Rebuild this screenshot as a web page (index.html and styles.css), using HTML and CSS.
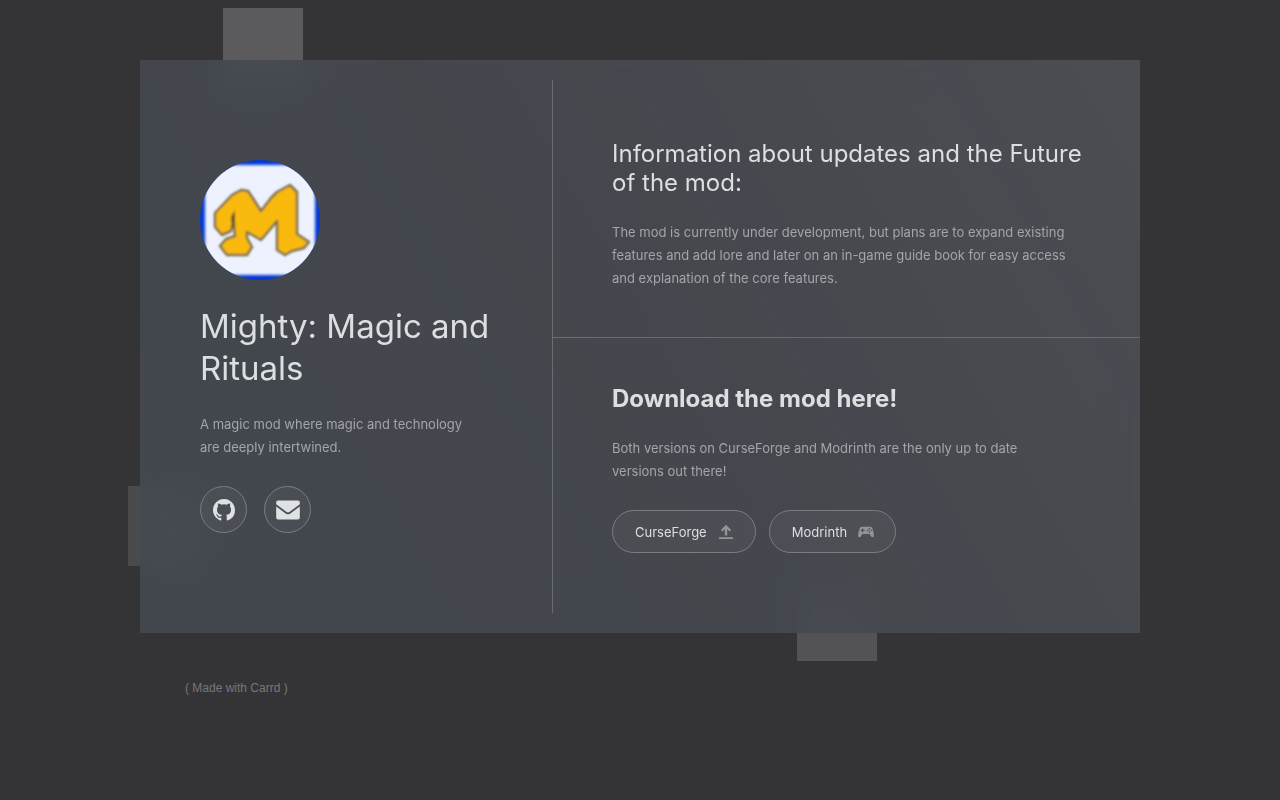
FILE: index.html
```html
<!DOCTYPE html>
<html lang="en">
<head>
<meta charset="utf-8">
<meta name="viewport" content="width=device-width, initial-scale=1">
<title>Mighty: Magic and Rituals</title>
<link rel="stylesheet" href="styles.css">
</head>
<body>
<div class="page">
  <span class="block block-top"></span>
  <span class="block block-left"></span>
  <span class="block block-bottom"></span>
  <main class="card">
    <section class="intro">
      <svg class="avatar" viewBox="0 0 120 120" role="img" aria-label="Mighty logo">
        <defs>
          <clipPath id="disc"><circle cx="60" cy="60" r="60"/></clipPath>
          <filter id="soft" x="-20%" y="-20%" width="140%" height="140%"><feGaussianBlur stdDeviation="1.7"/></filter>
          <filter id="edge"><feGaussianBlur stdDeviation="0.8"/></filter>
        </defs>
        <g clip-path="url(#disc)">
          <rect width="120" height="120" fill="#0638d2"/>
          <rect x="5" y="5" width="110" height="110" fill="#eef2ff" filter="url(#soft)"/>
          <g filter="url(#edge)">
            <path d="M15 53 32 35 41 30 48 31 54 40 61 51 71 38 77 32 90 25 97 32 97 74 109 82 104 88 92 91 85 95 77 90 77 61 61 80 47 72 47 78 52 87 47 95 27 95 20 86 26 79 35 76 34 65 32 66 31 71 22 75 15 67z" fill="#fab908" stroke="#7d704a" stroke-width="2.500" stroke-linejoin="round"/>
            <path d="M35 50 31 57 32 67 35 66z" fill="#57542f"/>
          </g>
        </g>
      </svg>
      <h1 class="title">Mighty: Magic and Rituals</h1>
      <p class="text">A magic mod where magic and technology are deeply intertwined.</p>
      <div class="socials">
        <a class="social" href="#github" aria-label="GitHub">
          <svg class="icon-github" viewBox="0 0 16 16"><path d="M8 0C3.58 0 0 3.58 0 8c0 3.54 2.29 6.53 5.47 7.59.4.07.55-.17.55-.38 0-.19-.01-.82-.01-1.49-2.01.37-2.53-.49-2.69-.94-.09-.23-.48-.94-.82-1.13-.28-.15-.68-.52-.01-.53.63-.01 1.08.58 1.23.82.72 1.21 1.87.87 2.33.66.07-.52.28-.87.51-1.07-1.78-.2-3.64-.89-3.64-3.95 0-.87.31-1.59.82-2.15-.08-.2-.36-1.02.08-2.12 0 0 .67-.21 2.2.82a7.6 7.6 0 0 1 4 0c1.53-1.04 2.2-.82 2.2-.82.44 1.1.16 1.92.08 2.12.51.56.82 1.27.82 2.15 0 3.07-1.87 3.75-3.65 3.95.29.25.54.73.54 1.48 0 1.07-.01 1.93-.01 2.2 0 .21.15.46.55.38A8.01 8.01 0 0 0 16 8c0-4.42-3.58-8-8-8z"/></svg>
        </a>
        <a class="social" href="#email" aria-label="Email">
          <svg class="icon-mail" viewBox="0 0 24 20"><path d="M2 .5h20a1.8 1.8 0 0 1 1.800 1.800v1.900L13.400 12q-1.400.9-2.800 0L.2 4.200V2.300A1.800 1.800 0 0 1 2 .5z"/><path d="M.2 6.500 10 13.700q2 1.300 4 0l9.800-7.200v11.200a1.800 1.800 0 0 1-1.800 1.800H2a1.800 1.800 0 0 1-1.800-1.800z"/></svg>
        </a>
      </div>
    </section>
    <div class="details">
      <section class="panel panel-news">
        <h2 class="heading">Information about updates and the Future of the mod:</h2>
        <p class="text">The mod is currently under development, but plans are to expand existing features and add lore and later on an in-game guide book for easy access and explanation of the core features.</p>
      </section>
      <section class="panel panel-download">
        <h2 class="heading heading-bold">Download the mod here!</h2>
        <p class="text">Both versions on CurseForge and Modrinth are the only up to date versions out there!</p>
        <div class="actions">
          <a class="button" href="#curseforge">CurseForge
            <svg viewBox="0 0 16 16" aria-hidden="true"><path d="M1 13.200h14V15H1z"/><path d="M8 .8 13.200 6 11.600 7.600 9.200 5.300V11.500H6.800V5.300L4.400 7.600 2.800 6z"/></svg>
          </a>
          <a class="button" href="#modrinth">Modrinth
            <svg viewBox="0 0 16 16" aria-hidden="true"><path fill-rule="evenodd" d="M3.500 2.800h9q1.300 0 1.800 1.500Q15.700 8 15.900 11.500 15.900 13.200 14.500 13.200q-1 0-1.500-.9L11.600 10H4.400L3 12.300q-.5.900-1.500.9Q.1 13.200.1 11.500.3 8 1.700 4.300 2.200 2.800 3.500 2.800zM4.100 4.500v1.300H2.800v1.100h1.300v1.300h1.100V6.900h1.300V5.800H5.200V4.500zM11.400 4a.7.7 0 1 0 .01 0zM11.400 7.200a.7.7 0 1 0 .01 0zM9.800 5.600a.7.7 0 1 0 .01 0zM13 5.600a.7.7 0 1 0 .01 0z"/></svg>
          </a>
        </div>
      </section>
    </div>
  </main>
  <footer class="footer"><a class="credit" href="#carrd">( Made with Carrd )</a></footer>
</div>
</body>
</html>
```
FILE: styles.css
```css
* { box-sizing: border-box; }
body {
  margin: 0;
  min-height: 100vh;
  background: #343436;
  color: #dcdee0;
  font-family: Inter, "Liberation Sans", sans-serif;
}
.page {
  position: relative;
  max-width: 1000px;
  margin: 0 auto;
  padding-top: 60px;
}
.block {
  position: absolute;
  width: 80px;
  height: 80px;
}
.block-top { left: 83px; top: 8px; background: #5b5b5d; }
.block-left { left: -12px; top: 486px; background: #4b4b4d; }
.block-bottom { left: 657px; top: 581px; background: #535355; }
.card {
  position: relative;
  display: grid;
  grid-template-columns: 413fr 587fr;
  background: linear-gradient(60deg, rgba(69, 74, 82, 0.86), rgba(70, 74, 80, 0.9) 55%, rgba(76, 79, 83, 0.94));
  backdrop-filter: blur(20px);
}
.intro {
  display: flex;
  flex-direction: column;
  justify-content: center;
  margin: 20px 0;
  padding: 20px 48px 20px 60px;
  border-right: 1px solid #696d70;
}
.avatar { width: 120px; height: 120px; }
.title {
  margin: 25px 0 24px;
  font-size: 33px;
  font-weight: 400;
  line-height: 42px;
}
.text {
  margin: 0;
  color: #a3a5a8;
  font-size: 13px;
  line-height: 23px;
}
.intro .text { max-width: 280px; }
.panel .text { max-width: 456px; }
.socials {
  display: flex;
  gap: 17px;
  margin-top: 27px;
}
.social {
  display: flex;
  align-items: center;
  justify-content: center;
  width: 47px;
  height: 47px;
  border: 1px solid #7b7e81;
  border-radius: 50%;
  background: rgba(255, 255, 255, 0.04);
}
.social svg { fill: #dfe1e3; }
.icon-github { width: 22px; height: 22px; }
.icon-mail { width: 24px; height: 20px; }
.panel { padding-left: 59px; padding-right: 48px; }
.panel-news {
  padding-top: 79px;
  padding-bottom: 47px;
  border-bottom: 1px solid #696d70;
}
.panel-download { padding-top: 46px; padding-bottom: 80px; }
.heading {
  margin: 0 0 24px;
  font-size: 24px;
  font-weight: 400;
  line-height: 29px;
}
.heading-bold { font-weight: 700; }
.actions {
  display: flex;
  flex-wrap: wrap;
  gap: 13px;
  margin-top: 27px;
}
.button {
  display: flex;
  align-items: center;
  gap: 11px;
  height: 43px;
  padding: 0 21px 0 22px;
  border: 1px solid #7b7e81;
  border-radius: 22px;
  background: rgba(255, 255, 255, 0.04);
  color: #dcdee0;
  font-size: 13px;
  text-decoration: none;
}
.button svg { width: 16px; height: 16px; fill: #929497; }
.footer { padding: 45px; }
.credit {
  display: block;
  color: #77777a;
  font-family: "Liberation Sans", sans-serif;
  font-size: 12px;
  line-height: 20px;
  text-decoration: none;
}
```
